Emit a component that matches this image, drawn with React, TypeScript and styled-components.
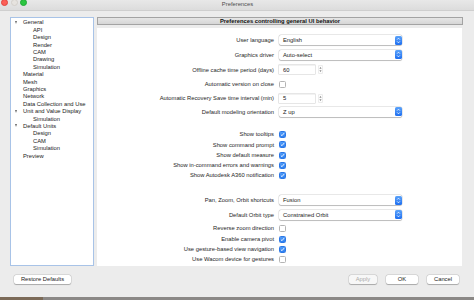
import React from 'react';
import styled, { createGlobalStyle } from 'styled-components';

const GlobalStyle = createGlobalStyle`
  html, body { margin: 0; padding: 0; width: 474px; height: 300px; overflow: hidden; }
  body {
    background: linear-gradient(to right, #7b6a58 0, #7b6a58 43px, #8b8886 43px);
    font-family: "Liberation Sans", Arial, sans-serif;
  }
`;

const Window = styled.div`
  height: 297px;
  background: #ececec;
  display: flex;
  flex-direction: column;
`;

const TitleBar = styled.div`
  height: 11px;
  box-sizing: border-box;
  display: grid;
  grid-template-columns: 1fr auto 1fr;
  align-items: start;
  background: linear-gradient(#e8e8e8, #dcdcdc);
  border-bottom: 1px solid #cfcfcf;
  padding-left: 1px;
`;

const Lights = styled.div`
  display: flex;
  gap: 2.5px;
  margin-top: -1px;
`;

const Light = styled.span<{ $c: string; $b: string }>`
  width: 7px;
  height: 7px;
  border-radius: 50%;
  box-sizing: border-box;
  background: ${p => p.$c};
  border: 0.5px solid ${p => p.$b};
`;

const Title = styled.div`
  font-size: 5.8px;
  color: #4d4d4d;
  line-height: 9px;
`;

const Body = styled.div`
  display: flex;
  gap: 3px;
  height: 255px;
  box-sizing: border-box;
  padding: 6px 11px 0 10px;
`;

const TreePanel = styled.div`
  width: 84px;
  flex: none;
  box-sizing: border-box;
  background: #fff;
  border: 1px solid #a8c3e7;
  padding-top: 0.8px;
`;

const TreeRow = styled.div<{ $level: number }>`
  height: 7.4px;
  display: flex;
  align-items: center;
  padding-left: ${p => (p.$level === 0 ? 4 : 14)}px;
  font-size: 5.8px;
  color: #1a1a1a;
  white-space: nowrap;
`;

const Toggle = styled.span`
  width: 8px;
  flex: none;
  display: flex;
  align-items: center;
`;

const Tri = styled.span`
  width: 0;
  height: 0;
  border-left: 1.8px solid transparent;
  border-right: 1.8px solid transparent;
  border-top: 3px solid #6a6a6a;
`;

const RightPanel = styled.div`
  flex: 1;
  display: flex;
  flex-direction: column;
  gap: 3px;
`;

const Header = styled.div`
  height: 8px;
  box-sizing: border-box;
  border: 1px solid #a3a3a3;
  background: linear-gradient(#e6e6e6, #d6d6d6);
  font-size: 5.8px;
  font-weight: bold;
  color: #111;
  text-align: center;
  line-height: 6px;
`;

const Content = styled.div`
  flex: 1;
  background: #fff;
  margin-right: 1px;
  padding-top: 5px;
  display: flex;
  flex-direction: column;
`;

const Row = styled.div<{ $h: number }>`
  height: ${p => p.$h}px;
  display: grid;
  grid-template-columns: 177px auto;
  column-gap: 5px;
  align-items: center;
`;

const Spacer = styled.div<{ $h: number }>`
  height: ${p => p.$h}px;
`;

const Label = styled.div`
  text-align: right;
  font-size: 5.8px;
  color: #1e1e1e;
  white-space: nowrap;
`;

const SelectBox = styled.div`
  width: 123px;
  height: 10px;
  box-sizing: border-box;
  background: #fff;
  border-radius: 2px;
  box-shadow: 0 0 0 0.5px rgba(0, 0, 0, 0.16), 0 0.6px 0.8px rgba(0, 0, 0, 0.2);
  display: flex;
  align-items: center;
  justify-content: space-between;
  padding: 0 0.5px 0 4px;
  font-size: 5.8px;
  color: #1a1a1a;
`;

const SpinWrap = styled.div`
  display: flex;
  align-items: center;
  gap: 3px;
`;

const SpinInput = styled.div`
  width: 36px;
  height: 9px;
  box-sizing: border-box;
  background: #fff;
  box-shadow: 0 0 0 0.5px rgba(0, 0, 0, 0.2), inset 0 0.5px 0.5px rgba(0, 0, 0, 0.1);
  display: flex;
  align-items: center;
  padding-left: 4px;
  font-size: 5.8px;
  color: #1a1a1a;
`;

const Check = styled.div<{ $on: boolean }>`
  width: 7px;
  height: 7px;
  box-sizing: border-box;
  border-radius: 1.5px;
  background: ${p => (p.$on ? 'linear-gradient(#4f9bf8, #2f7ff0)' : '#fff')};
  border: 0.5px solid ${p => (p.$on ? '#2c78e6' : '#b4b4b4')};
  display: flex;
  align-items: center;
  justify-content: center;
`;

const Footer = styled.div`
  display: flex;
  align-items: center;
  gap: 9px;
  padding: 9px 15px 0 14px;
`;

const Button = styled.button<{ $w: number; $disabled?: boolean }>`
  width: ${p => p.$w}px;
  height: 9px;
  padding: 0;
  border: none;
  border-radius: 2px;
  background: ${p => (p.$disabled ? '#f7f7f7' : '#fff')};
  color: ${p => (p.$disabled ? '#ababab' : '#1a1a1a')};
  box-shadow: 0 0 0 0.5px rgba(0, 0, 0, 0.14), 0 0.6px 0.8px rgba(0, 0, 0, 0.22);
  font-family: "Liberation Sans", Arial, sans-serif;
  font-size: 5.8px;
  line-height: 9px;
`;

const Grow = styled.div`
  flex: 1;
`;

const BlueStepper = () => (
  <svg width="7" height="9" viewBox="0 0 7 9">
    <defs>
      <linearGradient id="bs" x1="0" y1="0" x2="0" y2="1">
        <stop offset="0" stopColor="#5aa2fa" />
        <stop offset="1" stopColor="#1f6ff0" />
      </linearGradient>
    </defs>
    <rect x="0" y="0" width="7" height="9" rx="1.6" fill="url(#bs)" />
    <path d="M2.1 3.6 L3.5 2.2 L4.9 3.6 M2.1 5.4 L3.5 6.8 L4.9 5.4" stroke="#fff" strokeWidth="0.8" fill="none" />
  </svg>
);

const SmallStepper = () => (
  <svg width="5" height="9" viewBox="0 0 5 9">
    <rect x="0.25" y="0.25" width="4.5" height="8.5" rx="1.5" fill="#fdfdfd" stroke="#d2d2d2" strokeWidth="0.5" />
    <path d="M1.4 3.6 L2.5 2.2 L3.6 3.6 Z M1.4 5.4 L2.5 6.8 L3.6 5.4 Z" fill="#555" />
  </svg>
);

const Tick = () => (
  <svg width="5" height="5" viewBox="0 0 5 5">
    <path d="M0.9 2.6 L2 3.7 L4.1 1.1" stroke="#fff" strokeWidth="0.9" fill="none" />
  </svg>
);

type Item =
  | { kind: 'select'; label: string; value: string; h: number }
  | { kind: 'spin'; label: string; value: string; h: number }
  | { kind: 'check'; label: string; on: boolean; h: number }
  | { kind: 'gap'; h: number };

const items: Item[] = [
  { kind: 'select', label: 'User language', value: 'English', h: 14 },
  { kind: 'select', label: 'Graphics driver', value: 'Auto-select', h: 15 },
  { kind: 'spin', label: 'Offline cache time period (days)', value: '60', h: 15 },
  { kind: 'check', label: 'Automatic version on close', on: false, h: 14 },
  { kind: 'spin', label: 'Automatic Recovery Save time interval (min)', value: '5', h: 14 },
  { kind: 'select', label: 'Default modeling orientation', value: 'Z up', h: 13 },
  { kind: 'gap', h: 11 },
  { kind: 'check', label: 'Show tooltips', on: true, h: 10 },
  { kind: 'check', label: 'Show command prompt', on: true, h: 11 },
  { kind: 'check', label: 'Show default measure', on: true, h: 10 },
  { kind: 'check', label: 'Show in-command errors and warnings', on: true, h: 10 },
  { kind: 'check', label: 'Show Autodesk A360 notification', on: true, h: 10 },
  { kind: 'gap', h: 13 },
  { kind: 'select', label: 'Pan, Zoom, Orbit shortcuts', value: 'Fusion', h: 14 },
  { kind: 'select', label: 'Default Orbit type', value: 'Constrained Orbit', h: 15 },
  { kind: 'check', label: 'Reverse zoom direction', on: false, h: 12 },
  { kind: 'check', label: 'Enable camera pivot', on: true, h: 10 },
  { kind: 'check', label: 'Use gesture-based view navigation', on: true, h: 10 },
  { kind: 'check', label: 'Use Wacom device for gestures', on: false, h: 10 },
];

const tree: { t: string; level: number; open?: boolean }[] = [
  { t: 'General', level: 0, open: true },
  { t: 'API', level: 1 },
  { t: 'Design', level: 1 },
  { t: 'Render', level: 1 },
  { t: 'CAM', level: 1 },
  { t: 'Drawing', level: 1 },
  { t: 'Simulation', level: 1 },
  { t: 'Material', level: 0 },
  { t: 'Mesh', level: 0 },
  { t: 'Graphics', level: 0 },
  { t: 'Network', level: 0 },
  { t: 'Data Collection and Use', level: 0 },
  { t: 'Unit and Value Display', level: 0, open: true },
  { t: 'Simulation', level: 1 },
  { t: 'Default Units', level: 0, open: true },
  { t: 'Design', level: 1 },
  { t: 'CAM', level: 1 },
  { t: 'Simulation', level: 1 },
  { t: 'Preview', level: 0 },
];

export default function App() {
  return (
    <>
      <GlobalStyle />
      <Window>
        <TitleBar>
          <Lights>
            <Light $c="#fc5f57" $b="#e0443e" />
            <Light $c="#e6e3df" $b="#d3cfca" />
            <Light $c="#2bc640" $b="#1ea934" />
          </Lights>
          <Title>Preferences</Title>
          <div />
        </TitleBar>
        <Body>
          <TreePanel>
            {tree.map((n, i) => (
              <TreeRow key={i} $level={n.level}>
                <Toggle>{n.open ? <Tri /> : null}</Toggle>
                {n.t}
              </TreeRow>
            ))}
          </TreePanel>
          <RightPanel>
            <Header>Preferences controlling general UI behavior</Header>
            <Content>
              {items.map((it, i) => {
                if (it.kind === 'gap') return <Spacer key={i} $h={it.h} />;
                return (
                  <Row key={i} $h={it.h}>
                    <Label>{it.label}</Label>
                    {it.kind === 'select' && (
                      <SelectBox>
                        <span>{it.value}</span>
                        <BlueStepper />
                      </SelectBox>
                    )}
                    {it.kind === 'spin' && (
                      <SpinWrap>
                        <SpinInput>{it.value}</SpinInput>
                        <SmallStepper />
                      </SpinWrap>
                    )}
                    {it.kind === 'check' && <Check $on={it.on}>{it.on ? <Tick /> : null}</Check>}
                  </Row>
                );
              })}
            </Content>
          </RightPanel>
        </Body>
        <Footer>
          <Button $w={57}>Restore Defaults</Button>
          <Grow />
          <Button $w={28} $disabled>Apply</Button>
          <Button $w={32}>OK</Button>
          <Button $w={32}>Cancel</Button>
        </Footer>
      </Window>
    </>
  );
}
